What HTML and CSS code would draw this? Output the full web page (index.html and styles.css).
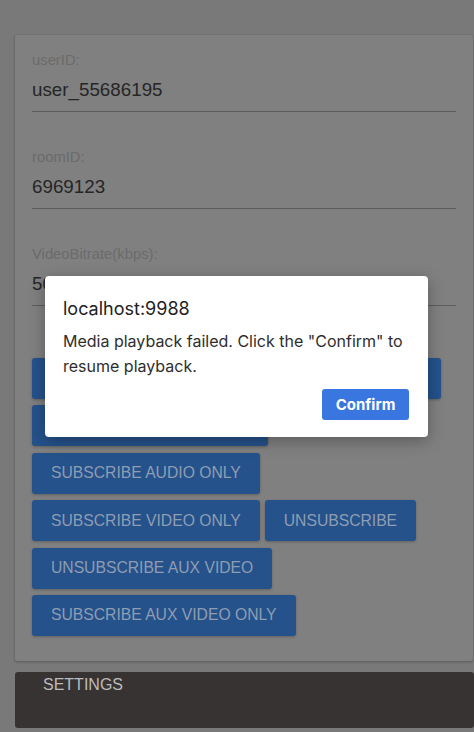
FILE: index.html
```html
<!DOCTYPE html>
<html>
<head>
<meta charset="utf-8">
<link rel="stylesheet" href="styles.css">
</head>
<body>
<div class="page">
  <div class="card">
    <div class="field">
      <div class="label">userID:</div>
      <div class="value">user_55686195</div>
    </div>
    <div class="field">
      <div class="label">roomID:</div>
      <div class="value">6969123</div>
    </div>
    <div class="field last">
      <div class="label">VideoBitrate(kbps):</div>
      <div class="value">500</div>
    </div>
    <div class="buttons">
      <div class="row">
        <button class="btn half" aria-label="Join room"></button>
        <button class="btn half" aria-label="Leave room"></button>
      </div>
      <div class="row">
        <button class="btn share" aria-label="Publish"></button>
      </div>
      <div class="row">
        <button class="btn">SUBSCRIBE AUDIO ONLY</button>
      </div>
      <div class="row">
        <button class="btn">SUBSCRIBE VIDEO ONLY</button>
        <button class="btn">UNSUBSCRIBE</button>
      </div>
      <div class="row">
        <button class="btn">UNSUBSCRIBE AUX VIDEO</button>
      </div>
      <div class="row">
        <button class="btn">SUBSCRIBE AUX VIDEO ONLY</button>
      </div>
    </div>
  </div>
  <div class="settings">SETTINGS</div>
</div>
<div class="dialog">
  <div class="dialog-title">localhost:9988</div>
  <div class="dialog-body">Media playback failed. Click the "Confirm" to resume playback.</div>
  <div class="dialog-actions">
    <button class="confirm">Confirm</button>
  </div>
</div>
</body>
</html>
```
FILE: styles.css
```css
html, body {
  margin: 0;
  padding: 0;
  background: #797979;
  font-family: "Liberation Sans", Arial, sans-serif;
  overflow: hidden;
}
.page {
  padding: 35px 0 0 15px;
}
.card {
  width: 424px;
  background: #808080;
  padding: 17px 17px 25px 17px;
  box-shadow: 0 1px 3px rgba(0,0,0,0.25), 0 0 1px rgba(0,0,0,0.2);
  border-radius: 2px;
}
.field {
  border-bottom: 1px solid #5d5d5d;
  padding-bottom: 7px;
  margin-bottom: 37px;
}
.field.last {
  margin-bottom: 52px;
}
.label {
  font-size: 14.8px;
  line-height: 16px;
  color: #6b6b6b;
}
.value {
  margin-top: 8px;
  font-size: 18.8px;
  line-height: 28px;
  color: #262626;
}
.buttons {
  display: flex;
  flex-direction: column;
  gap: 6.4px;
}
.row {
  display: flex;
  gap: 5px;
}
.btn {
  height: 41px;
  padding: 0 19px;
  border: none;
  border-radius: 3px;
  background: #25528b;
  color: #8e9db2;
  font-family: "Liberation Sans", Arial, sans-serif;
  font-size: 15.7px;
  box-shadow: 0 1px 3px rgba(0,0,0,0.25);
  white-space: nowrap;
}
.btn.half {
  width: 202px;
}
.btn.share {
  width: 236px;
}
.settings {
  margin-top: 11px;
  height: 56px;
  background: #373333;
  border-radius: 3px;
  color: #bcbcbc;
  font-size: 16px;
  line-height: 26px;
  padding-left: 28px;
  box-sizing: border-box;
}
.dialog {
  position: absolute;
  left: 45px;
  top: 276px;
  width: 383px;
  box-sizing: border-box;
  padding: 22px 19px 17px 18px;
  background: #ffffff;
  border-radius: 4px;
  box-shadow: 0 4px 16px rgba(0,0,0,0.3);
  font-family: Inter, "Liberation Sans", sans-serif;
}
.dialog-title {
  font-size: 18px;
  line-height: 22px;
  color: #222222;
}
.dialog-body {
  margin-top: 9px;
  font-size: 16px;
  line-height: 25px;
  color: #2e2e2e;
}
.dialog-actions {
  display: flex;
  justify-content: flex-end;
  margin-top: 10px;
}
.confirm {
  width: 87px;
  height: 31px;
  border: none;
  border-radius: 3px;
  background: #3a76e0;
  color: #ffffff;
  font-family: Inter, "Liberation Sans", sans-serif;
  font-weight: bold;
  font-size: 15px;
}
```
